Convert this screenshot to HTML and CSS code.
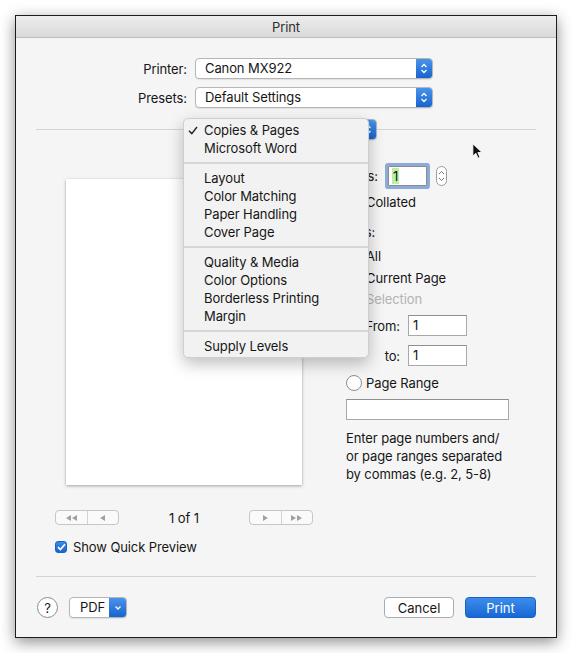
FILE: index.html
```html
<!DOCTYPE html>
<html lang="en">
<head>
    <meta charset="UTF-8">
    <title>Print</title>
    <link rel="stylesheet" href="styles.css">
</head>
<body>
    <div class="window">
        <div class="titlebar">Print</div>

        <div class="content">
            <!-- Printer / presets -->
            <div class="printer-form">
                <label class="form-label">Printer:</label>
                <div class="popup">
                    <span class="popup-text">Canon MX922</span>
                    <span class="popup-arrows"><svg width="8" height="13" viewBox="0 0 8 13"><path d="M1.5 5 L4 2.5 L6.5 5 M1.5 8 L4 10.5 L6.5 8" fill="none" stroke="#fff" stroke-width="1.3"/></svg></span>
                </div>
                <label class="form-label">Presets:</label>
                <div class="popup">
                    <span class="popup-text">Default Settings</span>
                    <span class="popup-arrows"><svg width="8" height="13" viewBox="0 0 8 13"><path d="M1.5 5 L4 2.5 L6.5 5 M1.5 8 L4 10.5 L6.5 8" fill="none" stroke="#fff" stroke-width="1.3"/></svg></span>
                </div>
            </div>

            <div class="pane-switch">
                <div class="pane-line"></div>
                <div class="popup pane-popup">
                    <span class="popup-text">Copies &amp; Pages</span>
                    <span class="popup-arrows"><svg width="8" height="13" viewBox="0 0 8 13"><path d="M1.5 5 L4 2.5 L6.5 5 M1.5 8 L4 10.5 L6.5 8" fill="none" stroke="#fff" stroke-width="1.3"/></svg></span>
                </div>
            </div>

            <div class="main">
                <!-- Preview -->
                <div class="preview-col">
                    <div class="page"></div>
                    <div class="pager">
                        <div class="seg">
                            <span class="seg-part"><svg width="11" height="6" viewBox="0 0 11 6"><polygon points="0,3 5,0 5,6" fill="#a0a0a0"/><polygon points="6,3 11,0 11,6" fill="#a0a0a0"/></svg></span>
                            <span class="seg-part"><svg width="5" height="6" viewBox="0 0 5 6"><polygon points="0,3 5,0 5,6" fill="#a0a0a0"/></svg></span>
                        </div>
                        <span class="page-count">1 of 1</span>
                        <div class="seg">
                            <span class="seg-part"><svg width="5" height="6" viewBox="0 0 5 6"><polygon points="5,3 0,0 0,6" fill="#a0a0a0"/></svg></span>
                            <span class="seg-part"><svg width="11" height="6" viewBox="0 0 11 6"><polygon points="5,3 0,0 0,6" fill="#a0a0a0"/><polygon points="11,3 6,0 6,6" fill="#a0a0a0"/></svg></span>
                        </div>
                    </div>
                    <div class="quick-preview">
                        <span class="checkbox checked"><svg width="9" height="8" viewBox="0 0 9 8"><path d="M1 4.2 L3.4 6.6 L8 1.2" fill="none" stroke="#fff" stroke-width="1.7"/></svg></span>
                        Show Quick Preview
                    </div>
                </div>

                <!-- Copies & pages -->
                <div class="settings-col">
                    <div class="copies-row">
                        <span class="copies-label">Copies:</span>
                        <span class="copies-field"><span class="sel">1</span></span>
                        <span class="stepper"><svg width="9" height="18" viewBox="0 0 9 18"><path d="M2 7 L4.5 4.5 L7 7 M2 11 L4.5 13.5 L7 11" fill="none" stroke="#777" stroke-width="1"/></svg></span>
                    </div>
                    <div class="option collated">
                        <span class="mark"><span class="checkbox checked small"><svg width="9" height="8" viewBox="0 0 9 8"><path d="M1 4.2 L3.4 6.6 L8 1.2" fill="none" stroke="#fff" stroke-width="1.7"/></svg></span></span>
                        Collated
                    </div>
                    <div class="pages-label">Pages:</div>
                    <div class="option opt-all"><span class="mark"><span class="radio on"></span></span>All</div>
                    <div class="option opt-current"><span class="mark"><span class="radio"></span></span>Current Page</div>
                    <div class="option opt-selection disabled"><span class="mark"><span class="radio"></span></span>Selection</div>
                    <div class="range-row from-row">
                        <span class="range-label">From:</span>
                        <span class="field">1</span>
                    </div>
                    <div class="range-row to-row">
                        <span class="range-label">to:</span>
                        <span class="field">1</span>
                    </div>
                    <div class="option opt-range"><span class="mark"><span class="radio"></span></span>Page Range</div>
                    <div class="field range-field"></div>
                    <p class="help-text">Enter page numbers and/<br>or page ranges separated<br>by commas (e.g. 2, 5-8)</p>
                </div>
            </div>

            <div class="footer">
                <span class="help-btn">?</span>
                <div class="popup pdf-btn">
                    <span class="popup-text">PDF</span>
                    <span class="popup-arrows pdf-arrow"><svg width="8" height="6" viewBox="0 0 8 6"><path d="M1.5 1.5 L4 4 L6.5 1.5" fill="none" stroke="#fff" stroke-width="1.3"/></svg></span>
                </div>
                <span class="spacer"></span>
                <button class="btn cancel">Cancel</button>
                <button class="btn print">Print</button>
            </div>
        </div>

        <!-- open pane menu -->
        <div class="menu">
            <div class="menu-item"><svg class="menu-check" width="10" height="9" viewBox="0 0 10 9"><path d="M1 4.8 L3.8 7.6 L9 1" fill="none" stroke="#222" stroke-width="1.4"/></svg>Copies &amp; Pages</div>
            <div class="menu-item">Microsoft Word</div>
            <div class="menu-sep"></div>
            <div class="menu-item">Layout</div>
            <div class="menu-item">Color Matching</div>
            <div class="menu-item">Paper Handling</div>
            <div class="menu-item">Cover Page</div>
            <div class="menu-sep"></div>
            <div class="menu-item">Quality &amp; Media</div>
            <div class="menu-item">Color Options</div>
            <div class="menu-item">Borderless Printing</div>
            <div class="menu-item">Margin</div>
            <div class="menu-sep"></div>
            <div class="menu-item">Supply Levels</div>
        </div>

        <svg class="cursor" width="11" height="16" viewBox="0 0 13 19"><path d="M1 1 L1 15.5 L4.6 12.2 L7.2 18 L9.4 17 L6.9 11.3 L11.8 11.3 Z" fill="#111" stroke="#fff" stroke-width="1"/></svg>
    </div>
</body>
</html>
```

FILE: styles.css
```css
* {
    box-sizing: border-box;
}

body {
    margin: 0;
    padding: 15px;
    background: #fff;
    font-family: "Inter", "Liberation Sans", sans-serif;
    font-size: 13px;
    letter-spacing: -0.1px;
    color: #161616;
}

.window {
    position: relative;
    width: 542px;
    height: 623px;
    border: 1px solid #1c1c1c;
    background: #f5f5f5;
    box-shadow: 0 4px 14px rgba(0, 0, 0, 0.45);
    display: flex;
    flex-direction: column;
}

.titlebar {
    height: 22px;
    line-height: 22px;
    text-align: center;
    color: #2e2e2e;
    background: linear-gradient(#ededed, #d9d9d9);
    border-bottom: 1px solid #bdbdbd;
}

.content {
    flex: 1;
    padding: 0 20px;
    display: flex;
    flex-direction: column;
}

/* popup buttons */
.printer-form {
    display: grid;
    grid-template-columns: 151px 238px;
    gap: 8px;
    align-items: center;
    padding-top: 20px;
}

.form-label {
    text-align: right;
}

.popup {
    display: flex;
    height: 21px;
    background: #fff;
    border: 1px solid #b5b5b5;
    border-radius: 4px;
    box-shadow: 0 1px 1px rgba(0, 0, 0, 0.08);
    overflow: hidden;
}

.popup-text {
    flex: 1;
    padding-left: 9px;
    line-height: 19px;
}

.popup-arrows {
    width: 16px;
    background: linear-gradient(#4b93ea, #1664cf);
    display: flex;
    align-items: center;
    justify-content: center;
}

.pane-switch {
    display: grid;
    margin-top: 11px;
}

.pane-switch > * {
    grid-area: 1 / 1;
}

.pane-line {
    align-self: center;
    height: 1px;
    background: #d4d4d4;
}

.pane-popup {
    justify-self: center;
    width: 181px;
}

/* main area */
.main {
    display: grid;
    grid-template-columns: 296px 1fr;
    align-items: start;
    padding-bottom: 21px;
}

.preview-col {
    padding-top: 39px;
}

.page {
    width: 236px;
    height: 306px;
    margin: 0 auto;
    background: #fff;
    box-shadow: 0 1px 3px rgba(0, 0, 0, 0.35);
}

.pager {
    display: flex;
    justify-content: space-between;
    align-items: center;
    height: 15px;
    margin-top: 25px;
    padding: 0 19px;
}

.seg {
    display: flex;
    width: 64px;
    height: 15px;
    border: 1px solid #c6c6c6;
    border-radius: 4px;
    background: #fafafa;
}

.seg-part {
    flex: 1;
    display: flex;
    align-items: center;
    justify-content: center;
}

.seg-part + .seg-part {
    border-left: 1px solid #d2d2d2;
}

.quick-preview {
    display: flex;
    align-items: center;
    gap: 6px;
    height: 16px;
    margin-top: 14px;
    padding-left: 19px;
}

.checkbox {
    width: 12px;
    height: 12px;
    border-radius: 3px;
    border: 1px solid #8e8e8e;
    background: #fff;
    display: inline-flex;
    align-items: center;
    justify-content: center;
}

.checkbox.checked {
    border-color: #1a62c4;
    background: linear-gradient(#3a8ae8, #1866d0);
}

/* copies & pages column */
.settings-col {
    padding-top: 24px;
}

.copies-row {
    display: flex;
    align-items: center;
    height: 24px;
}

.copies-label {
    width: 46px;
    text-align: right;
}

.copies-field {
    margin-left: 10px;
    width: 39px;
    height: 20px;
    padding-left: 3px;
    line-height: 18px;
    border: 1px solid #8a8a8a;
    background: #fff;
    box-shadow: 0 0 0 3px rgba(106, 145, 204, 0.75);
    border-radius: 1px;
}

.sel {
    background: #b8f0a6;
    padding: 0 1px;
}

.stepper {
    margin-left: 9px;
    width: 11px;
    height: 20px;
    border: 1px solid #9c9c9c;
    border-radius: 6px;
    background: #fff;
    display: flex;
    align-items: center;
    justify-content: center;
}

.option {
    display: flex;
    align-items: center;
    height: 16px;
    padding-left: 14px;
}

.option .mark {
    width: 20px;
    display: flex;
}

.option.disabled {
    color: #b3b3b3;
}

.collated { margin-top: 6px; }
.opt-all { margin-top: 8px; }
.opt-current { margin-top: 6px; }
.opt-selection { margin-top: 5px; }
.opt-range { margin-top: 9px; }

.pages-label {
    margin-top: 14px;
    padding-left: 2px;
    height: 16px;
    line-height: 16px;
}

.radio {
    width: 16px;
    height: 16px;
    border-radius: 50%;
    border: 1px solid #8e8e8e;
    background: #fff;
}

.radio.on {
    border: 5px solid #1d6fd9;
}

.range-row {
    display: grid;
    grid-template-columns: 68px 59px;
    gap: 8px;
    align-items: center;
}

.from-row { margin-top: 8px; }
.to-row { margin-top: 9px; }

.range-label {
    text-align: right;
}

.field {
    height: 21px;
    padding-left: 4px;
    line-height: 19px;
    border: 1px solid #a8a8a8;
    border-top-color: #8f8f8f;
    background: #fff;
}

.range-field {
    margin: 8px 0 0 14px;
    width: 163px;
}

.help-text {
    margin: 9px 0 0;
    padding-left: 14px;
    line-height: 18px;
}

/* footer */
.footer {
    display: flex;
    align-items: center;
    border-top: 1px solid #d4d4d4;
    padding-top: 20px;
}

.help-btn {
    width: 21px;
    height: 21px;
    margin-left: 1px;
    border-radius: 50%;
    border: 1px solid #8c8c8c;
    background: #fff;
    display: flex;
    align-items: center;
    justify-content: center;
    font-size: 13px;
}

.pdf-btn {
    width: 58px;
    margin-left: 11px;
}

.pdf-btn .popup-text {
    padding-left: 10px;
}

.pdf-arrow {
    width: 17px;
}

.spacer {
    flex: 1;
}

.btn {
    height: 21px;
    border-radius: 4px;
    font: inherit;
    padding: 0;
}

.cancel {
    width: 70px;
    background: #fff;
    border: 1px solid #ababab;
    color: #161616;
}

.print {
    width: 71px;
    margin-left: 11px;
    border: 1px solid #1660c6;
    background: linear-gradient(#3d8cec, #1868d4);
    color: #fff;
}

/* open menu */
.menu {
    position: absolute;
    left: 167px;
    top: 102px;
    width: 186px;
    padding: 2px 0;
    background: #f2f2f2;
    border: 1px solid #cfcfcf;
    border-radius: 5px;
    box-shadow: 0 6px 16px rgba(0, 0, 0, 0.25);
}

.menu-item {
    position: relative;
    height: 18px;
    line-height: 19px;
    padding-left: 20px;
}

.menu-check {
    position: absolute;
    left: 4px;
    top: 5px;
}

.menu-sep {
    height: 2px;
    margin: 5px 0;
    background: #d6d6d6;
}

.cursor {
    position: absolute;
    left: 456px;
    top: 127px;
}
```
